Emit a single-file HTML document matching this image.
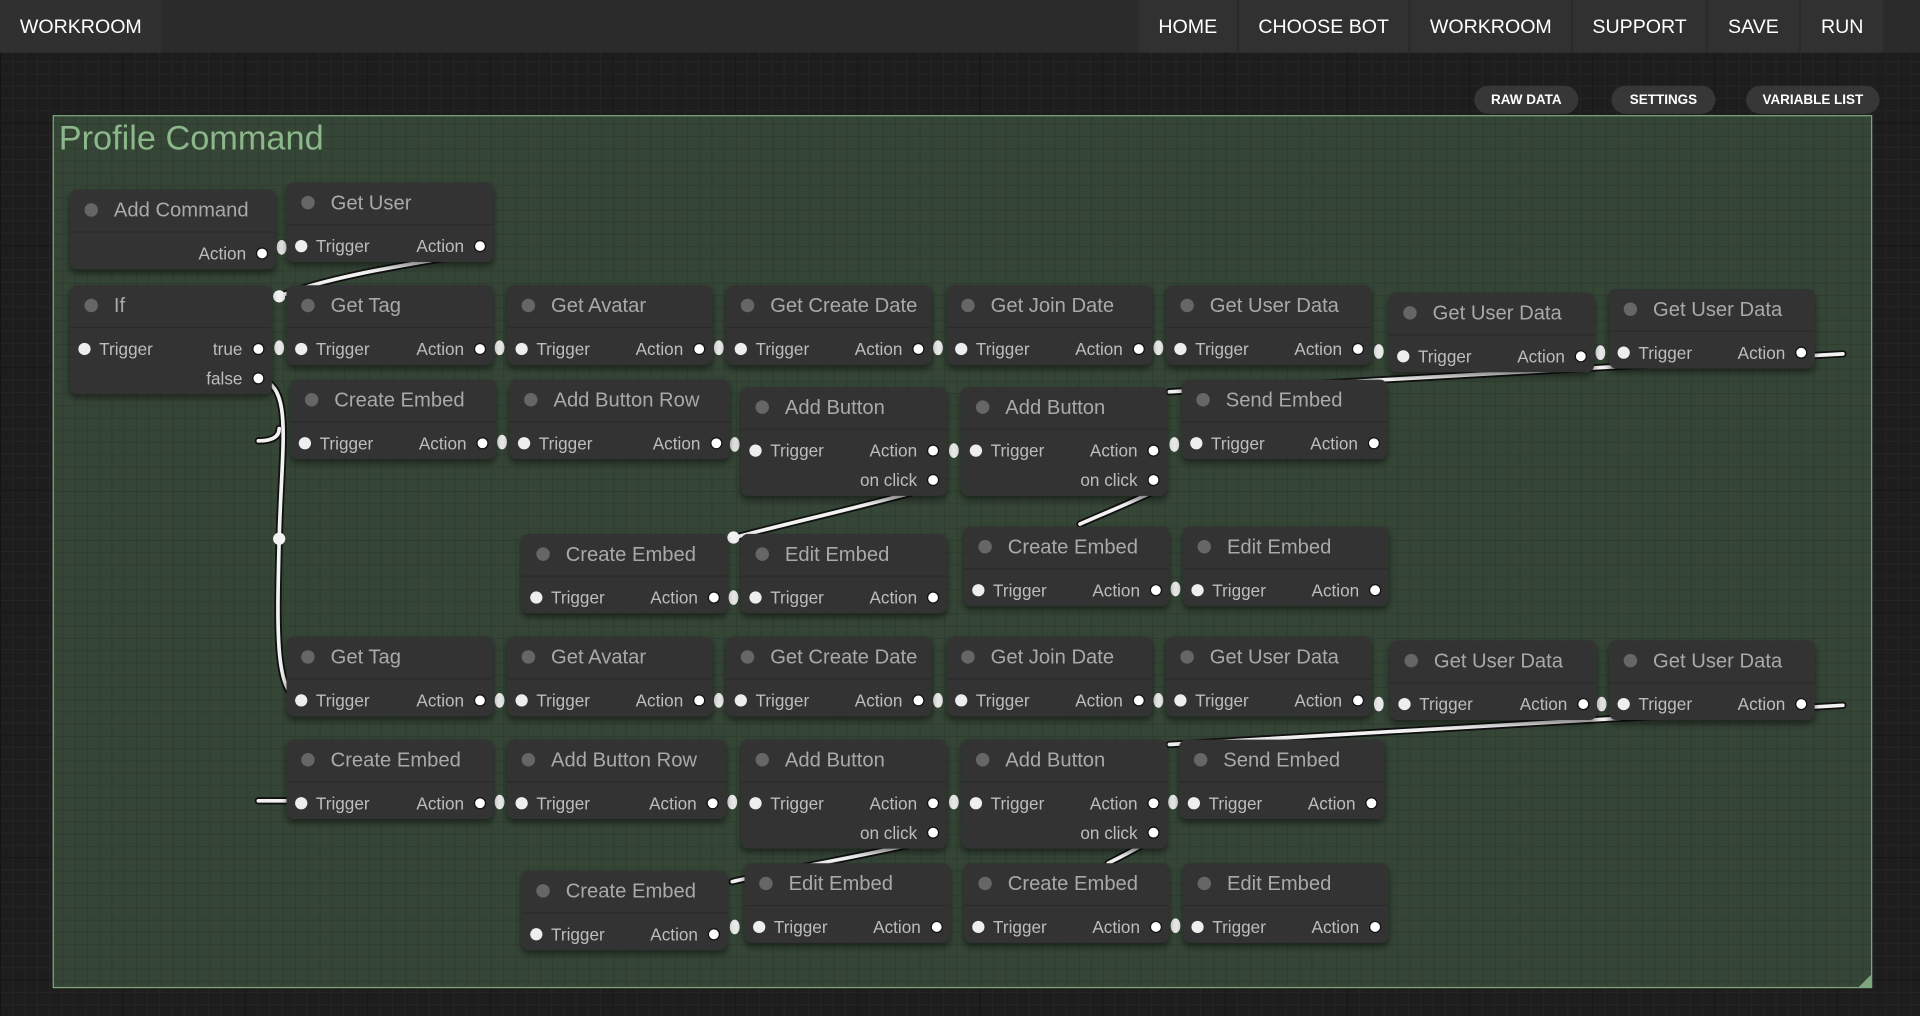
<!DOCTYPE html>
<html><head><meta charset="utf-8"><style>
html,body{margin:0;padding:0;width:1920px;height:1016px;overflow:hidden;background:#1d1d1d;font-family:"Liberation Sans",Arial,sans-serif}
#w{position:absolute;left:0;top:0;width:1568px;height:830px;transform:scale(1.22449);transform-origin:0 0;
background-color:#1d1d1d;
background-image:linear-gradient(#151515 1px,transparent 1px),linear-gradient(90deg,#151515 1px,transparent 1px),linear-gradient(#252525 1px,transparent 1px),linear-gradient(90deg,#252525 1px,transparent 1px);
background-size:100px 100px,100px 100px,10px 10px,10px 10px}
#hd{position:absolute;left:0;top:0;width:1568px;height:43px;background:#2b2b2b}
.t{position:absolute;top:0;height:43px;background:#313131;color:#fff;font-size:16px;line-height:45px;text-align:center}
.b{position:absolute;top:70px;height:23px;border-radius:12px;background:#373737;color:#fff;font-size:11px;font-weight:bold;line-height:24px;text-align:center}
#g{position:absolute;left:43px;top:94px;width:1484px;height:711px;border:1px solid #7fa67f;
background-color:#354536;
background-image:linear-gradient(#2f3d30 1px,transparent 1px),linear-gradient(90deg,#2f3d30 1px,transparent 1px);background-size:10px 10px;background-position:-3px -4px}
#g .ti{position:absolute;left:4px;top:2px;font-size:28px;color:#8bb78b}
#g .cr{position:absolute;right:0;bottom:0;width:0;height:0;border-left:10px solid transparent;border-bottom:10px solid #7fa67f}
svg{position:absolute;left:0;top:0}
.n{position:absolute;height:65px;background:#333;border-radius:6px;box-shadow:0 3px 5px rgba(0,0,0,.45)}
.n.t2{height:89px}
.h{height:34px;border-bottom:1px solid #2b2b2b;font-size:16.5px;color:#a9a9a9;line-height:34px;padding-left:36px;position:relative;white-space:nowrap}
.h i{position:absolute;left:12px;top:11px;width:11px;height:11px;border-radius:50%;background:#666}
.r{position:absolute;left:0;right:0;height:24px;font-size:14px;color:#bdbdbd;line-height:24px}
.r1{top:40px}.r2{top:64px}
.in{position:absolute;left:24px}
.in:before{content:"";position:absolute;left:-17px;top:7px;width:10px;height:10px;border-radius:50%;background:#eee}
.out{position:absolute;right:24px}
.out:after{content:"";position:absolute;right:-18px;top:7px;width:8px;height:8px;border-radius:50%;background:#fff;border:1.5px solid #111}
.k{position:absolute;width:8px;height:12px;border-radius:50%;background:#e8e8e8}
</style></head><body><div id="w">
<div id="hd">
<div class="t" style="left:0;width:132px;background:#303030">WORKROOM</div>
<div class="t" style="left:930px;width:80px">HOME</div>
<div class="t" style="left:1012px;width:138px">CHOOSE BOT</div>
<div class="t" style="left:1152px;width:131px">WORKROOM</div>
<div class="t" style="left:1285px;width:108px">SUPPORT</div>
<div class="t" style="left:1395px;width:74px">SAVE</div>
<div class="t" style="left:1471px;width:67px">RUN</div>
</div>
<div class="b" style="left:1204px;width:85px">RAW DATA</div>
<div class="b" style="left:1316px;width:85px">SETTINGS</div>
<div class="b" style="left:1426px;width:109px">VARIABLE LIST</div>
<div id="g"><div class="ti">Profile Command</div><div class="cr"></div></div>

<svg width="1568" height="830">
<g fill="none" stroke-linecap="round">
<g stroke="#111" stroke-width="6">
<path d="M392,206 C340,215 270,225 228,242"/>
<path d="M211,309 C240,315 230,360 228,440 C226,520 225,565 245,572"/>
<path d="M228,350 C228,358 220,360 211,360"/>
<path d="M1505,289 C1300,300 1100,312 955,320"/>
<path d="M761,398 C700,415 640,428 600,439"/>
<path d="M945,400 C920,412 900,420 882,428"/>
<path d="M1505,576 C1300,588 1100,600 955,608"/>
<path d="M761,686 C700,700 640,710 598,720"/>
<path d="M940,686 C925,695 915,700 905,705"/>
<path d="M211,654 L237,654"/>
</g>
<g stroke="#f2f2f2" stroke-width="3">
<path d="M392,206 C340,215 270,225 228,242"/>
<path d="M211,309 C240,315 230,360 228,440 C226,520 225,565 245,572"/>
<path d="M228,350 C228,358 220,360 211,360"/>
<path d="M1505,289 C1300,300 1100,312 955,320"/>
<path d="M761,398 C700,415 640,428 600,439"/>
<path d="M945,400 C920,412 900,420 882,428"/>
<path d="M1505,576 C1300,588 1100,600 955,608"/>
<path d="M761,686 C700,700 640,710 598,720"/>
<path d="M940,686 C925,695 915,700 905,705"/>
<path d="M211,654 L237,654"/>
</g></g>
<g fill="#f2f2f2"><circle cx="228" cy="242" r="5"/><circle cx="228" cy="440" r="5"/><circle cx="599" cy="439" r="5"/></g>
</svg>

<div class="k" style="left:226px;top:196px"></div>
<div class="k" style="left:224px;top:278px"></div>
<div class="k" style="left:404px;top:278px"></div>
<div class="k" style="left:583px;top:278px"></div>
<div class="k" style="left:762px;top:278px"></div>
<div class="k" style="left:942px;top:278px"></div>
<div class="k" style="left:1122px;top:281px"></div>
<div class="k" style="left:1303px;top:282px"></div>
<div class="k" style="left:406px;top:355px"></div>
<div class="k" style="left:596px;top:357px"></div>
<div class="k" style="left:775px;top:362px"></div>
<div class="k" style="left:955px;top:357px"></div>
<div class="k" style="left:595px;top:482px"></div>
<div class="k" style="left:956px;top:475px"></div>
<div class="k" style="left:404px;top:566px"></div>
<div class="k" style="left:583px;top:566px"></div>
<div class="k" style="left:762px;top:566px"></div>
<div class="k" style="left:942px;top:566px"></div>
<div class="k" style="left:1122px;top:569px"></div>
<div class="k" style="left:1304px;top:569px"></div>
<div class="k" style="left:404px;top:649px"></div>
<div class="k" style="left:594px;top:649px"></div>
<div class="k" style="left:775px;top:649px"></div>
<div class="k" style="left:954px;top:649px"></div>
<div class="k" style="left:596px;top:751px"></div>
<div class="k" style="left:956px;top:750px"></div>

<div class="n" style="left:57px;top:155px;width:168px"><div class="h"><i></i>Add Command</div><div class="r r1"><span class="out">Action</span></div></div>
<div class="n" style="left:234px;top:149px;width:169px"><div class="h"><i></i>Get User</div><div class="r r1"><span class="in">Trigger</span><span class="out">Action</span></div></div>
<div class="n t2" style="left:57px;top:233px;width:165px"><div class="h"><i></i>If</div><div class="r r1"><span class="in">Trigger</span><span class="out">true</span></div><div class="r r2"><span class="out">false</span></div></div>

<div class="n" style="left:234px;top:233px;width:169px"><div class="h"><i></i>Get Tag</div><div class="r r1"><span class="in">Trigger</span><span class="out">Action</span></div></div>
<div class="n" style="left:414px;top:233px;width:168px"><div class="h"><i></i>Get Avatar</div><div class="r r1"><span class="in">Trigger</span><span class="out">Action</span></div></div>
<div class="n" style="left:593px;top:233px;width:168px"><div class="h"><i></i>Get Create Date</div><div class="r r1"><span class="in">Trigger</span><span class="out">Action</span></div></div>
<div class="n" style="left:773px;top:233px;width:168px"><div class="h"><i></i>Get Join Date</div><div class="r r1"><span class="in">Trigger</span><span class="out">Action</span></div></div>
<div class="n" style="left:952px;top:233px;width:168px"><div class="h"><i></i>Get User Data</div><div class="r r1"><span class="in">Trigger</span><span class="out">Action</span></div></div>
<div class="n" style="left:1134px;top:239px;width:168px"><div class="h"><i></i>Get User Data</div><div class="r r1"><span class="in">Trigger</span><span class="out">Action</span></div></div>
<div class="n" style="left:1314px;top:236px;width:168px"><div class="h"><i></i>Get User Data</div><div class="r r1"><span class="in">Trigger</span><span class="out">Action</span></div></div>

<div class="n" style="left:237px;top:310px;width:168px"><div class="h"><i></i>Create Embed</div><div class="r r1"><span class="in">Trigger</span><span class="out">Action</span></div></div>
<div class="n" style="left:416px;top:310px;width:180px"><div class="h"><i></i>Add Button Row</div><div class="r r1"><span class="in">Trigger</span><span class="out">Action</span></div></div>
<div class="n t2" style="left:605px;top:316px;width:168px"><div class="h"><i></i>Add Button</div><div class="r r1"><span class="in">Trigger</span><span class="out">Action</span></div><div class="r r2"><span class="out">on click</span></div></div>
<div class="n t2" style="left:785px;top:316px;width:168px"><div class="h"><i></i>Add Button</div><div class="r r1"><span class="in">Trigger</span><span class="out">Action</span></div><div class="r r2"><span class="out">on click</span></div></div>
<div class="n" style="left:965px;top:310px;width:168px"><div class="h"><i></i>Send Embed</div><div class="r r1"><span class="in">Trigger</span><span class="out">Action</span></div></div>

<div class="n" style="left:426px;top:436px;width:168px"><div class="h"><i></i>Create Embed</div><div class="r r1"><span class="in">Trigger</span><span class="out">Action</span></div></div>
<div class="n" style="left:605px;top:436px;width:168px"><div class="h"><i></i>Edit Embed</div><div class="r r1"><span class="in">Trigger</span><span class="out">Action</span></div></div>
<div class="n" style="left:787px;top:430px;width:168px"><div class="h"><i></i>Create Embed</div><div class="r r1"><span class="in">Trigger</span><span class="out">Action</span></div></div>
<div class="n" style="left:966px;top:430px;width:168px"><div class="h"><i></i>Edit Embed</div><div class="r r1"><span class="in">Trigger</span><span class="out">Action</span></div></div>

<div class="n" style="left:234px;top:520px;width:169px"><div class="h"><i></i>Get Tag</div><div class="r r1"><span class="in">Trigger</span><span class="out">Action</span></div></div>
<div class="n" style="left:414px;top:520px;width:168px"><div class="h"><i></i>Get Avatar</div><div class="r r1"><span class="in">Trigger</span><span class="out">Action</span></div></div>
<div class="n" style="left:593px;top:520px;width:168px"><div class="h"><i></i>Get Create Date</div><div class="r r1"><span class="in">Trigger</span><span class="out">Action</span></div></div>
<div class="n" style="left:773px;top:520px;width:168px"><div class="h"><i></i>Get Join Date</div><div class="r r1"><span class="in">Trigger</span><span class="out">Action</span></div></div>
<div class="n" style="left:952px;top:520px;width:168px"><div class="h"><i></i>Get User Data</div><div class="r r1"><span class="in">Trigger</span><span class="out">Action</span></div></div>
<div class="n" style="left:1135px;top:523px;width:169px"><div class="h"><i></i>Get User Data</div><div class="r r1"><span class="in">Trigger</span><span class="out">Action</span></div></div>
<div class="n" style="left:1314px;top:523px;width:168px"><div class="h"><i></i>Get User Data</div><div class="r r1"><span class="in">Trigger</span><span class="out">Action</span></div></div>

<div class="n" style="left:234px;top:604px;width:169px"><div class="h"><i></i>Create Embed</div><div class="r r1"><span class="in">Trigger</span><span class="out">Action</span></div></div>
<div class="n" style="left:414px;top:604px;width:179px"><div class="h"><i></i>Add Button Row</div><div class="r r1"><span class="in">Trigger</span><span class="out">Action</span></div></div>
<div class="n t2" style="left:605px;top:604px;width:168px"><div class="h"><i></i>Add Button</div><div class="r r1"><span class="in">Trigger</span><span class="out">Action</span></div><div class="r r2"><span class="out">on click</span></div></div>
<div class="n t2" style="left:785px;top:604px;width:168px"><div class="h"><i></i>Add Button</div><div class="r r1"><span class="in">Trigger</span><span class="out">Action</span></div><div class="r r2"><span class="out">on click</span></div></div>
<div class="n" style="left:963px;top:604px;width:168px"><div class="h"><i></i>Send Embed</div><div class="r r1"><span class="in">Trigger</span><span class="out">Action</span></div></div>

<div class="n" style="left:426px;top:711px;width:168px"><div class="h"><i></i>Create Embed</div><div class="r r1"><span class="in">Trigger</span><span class="out">Action</span></div></div>
<div class="n" style="left:608px;top:705px;width:168px"><div class="h"><i></i>Edit Embed</div><div class="r r1"><span class="in">Trigger</span><span class="out">Action</span></div></div>
<div class="n" style="left:787px;top:705px;width:168px"><div class="h"><i></i>Create Embed</div><div class="r r1"><span class="in">Trigger</span><span class="out">Action</span></div></div>
<div class="n" style="left:966px;top:705px;width:168px"><div class="h"><i></i>Edit Embed</div><div class="r r1"><span class="in">Trigger</span><span class="out">Action</span></div></div>
</div></body></html>
